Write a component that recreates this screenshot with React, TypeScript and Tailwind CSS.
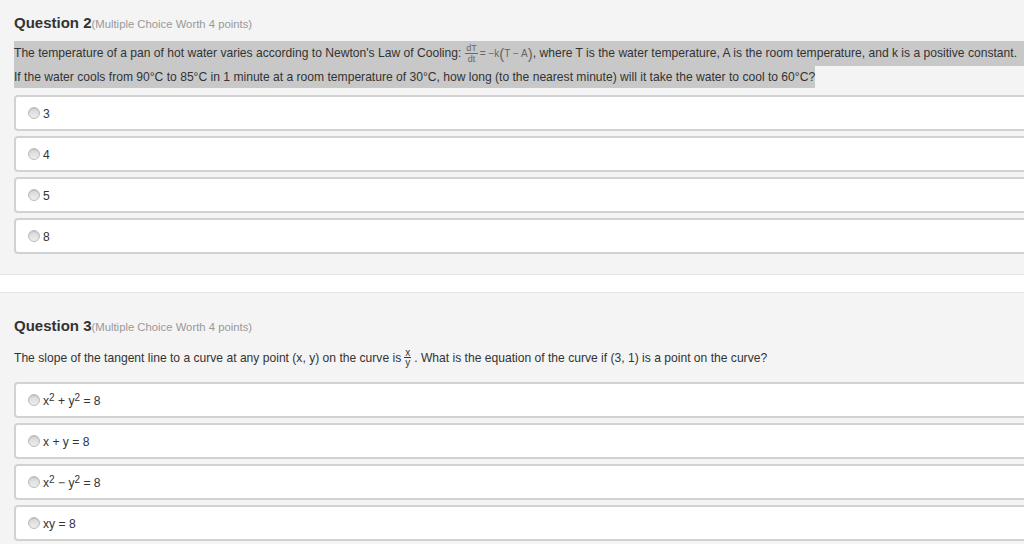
import React from "react";

function Radio() {
  return (
    <span className="inline-block w-[12px] h-[12px] rounded-full border border-[#bcbcbc] bg-gradient-to-b from-[#d6d6d6] to-[#eeeeee] shadow-[inset_0_1px_1px_rgba(0,0,0,0.12)] mr-[3px] shrink-0" />
  );
}

function Option({ children }: { children: React.ReactNode }) {
  return (
    <div className="h-[36px] mb-[5px] mr-[-20px] border-2 border-[#d2d2d2] rounded-[4px] bg-white flex items-center pl-[12px]">
      <Radio />
      <span className="text-[12.1px] text-[#333] leading-[14px] mt-[2px]">{children}</span>
    </div>
  );
}

function Title({ n }: { n: number }) {
  return (
    <div className="h-[20px] leading-[20px] flex items-baseline">
      <span className="text-[15px] font-bold text-[#333]">Question {n}</span>
      <span className="text-[11.3px] text-[#999]">(Multiple Choice Worth 4 points)</span>
    </div>
  );
}

function Frac({ top, bottom, cls }: { top: string; bottom: string; cls?: string }) {
  return (
    <span className={"inline-flex flex-col items-center align-middle mx-[2px] " + (cls || "")}>
      <span className="leading-[9px] px-[1px]">{top}</span>
      <span className="block w-full h-px bg-current" />
      <span className="leading-[10px] px-[1px]">{bottom}</span>
    </span>
  );
}

export default function App() {
  return (
    <div className="w-[1024px] h-[544px] overflow-hidden bg-[#f4f4f4]" style={{ fontFamily: '"Liberation Sans", Arial, sans-serif' }}>
      <div className="pl-[14px] pt-[13px]">
        <Title n={2} />
        <div className="mt-[8px] text-[12.1px] text-[#333]">
          <div className="bg-[#c8c8c8] h-[25px] flex items-center whitespace-nowrap">
            <span>The temperature of a pan of hot water varies according to Newton's Law of Cooling:</span>
            <Frac top="dT" bottom="dt" cls="text-[9px] text-[#666] ml-[4px]" />
            <span className="text-[10px] text-[#666] flex items-center">
              =&nbsp;−k<span className="text-[15px] font-light leading-[15px]">(</span>T − A<span className="text-[15px] font-light leading-[15px]">)</span>
            </span>
            <span>, where T is the water temperature, A is the room temperature, and k is a positive constant.</span>
          </div>
          <div className="h-[22px] leading-[22px]">
            <span className="bg-[#c8c8c8] inline-block h-[22px]">If the water cools from 90°C to 85°C in 1 minute at a room temperature of 30°C, how long (to the nearest minute) will it take the water to cool to 60°C?</span>
          </div>
        </div>
        <div className="mt-[7px]">
          <Option>3</Option>
          <Option>4</Option>
          <Option>5</Option>
          <Option>8</Option>
        </div>
      </div>
      <div className="mt-[20px] h-[19px] bg-white border-y border-[#e4e4e4]" />
      <div className="pl-[14px] pt-[23px]">
        <Title n={3} />
        <div className="mt-[8px] h-[28px] flex items-center text-[12.1px] text-[#333] whitespace-nowrap">
          <span>The slope of the tangent line to a curve at any point (x, y) on the curve is</span>
          <Frac top="x" bottom="y" cls="text-[10px] text-[#333] mx-[3px]" />
          <span>. What is the equation of the curve if (3, 1) is a point on the curve?</span>
        </div>
        <div className="mt-[10px]">
          <Option>x<sup className="text-[10px] top-[-0.45em]">2</sup> + y<sup className="text-[10px] top-[-0.45em]">2</sup> = 8</Option>
          <Option>x + y = 8</Option>
          <Option>x<sup className="text-[10px] top-[-0.45em]">2</sup> − y<sup className="text-[10px] top-[-0.45em]">2</sup> = 8</Option>
          <Option>xy = 8</Option>
        </div>
      </div>
    </div>
  );
}
